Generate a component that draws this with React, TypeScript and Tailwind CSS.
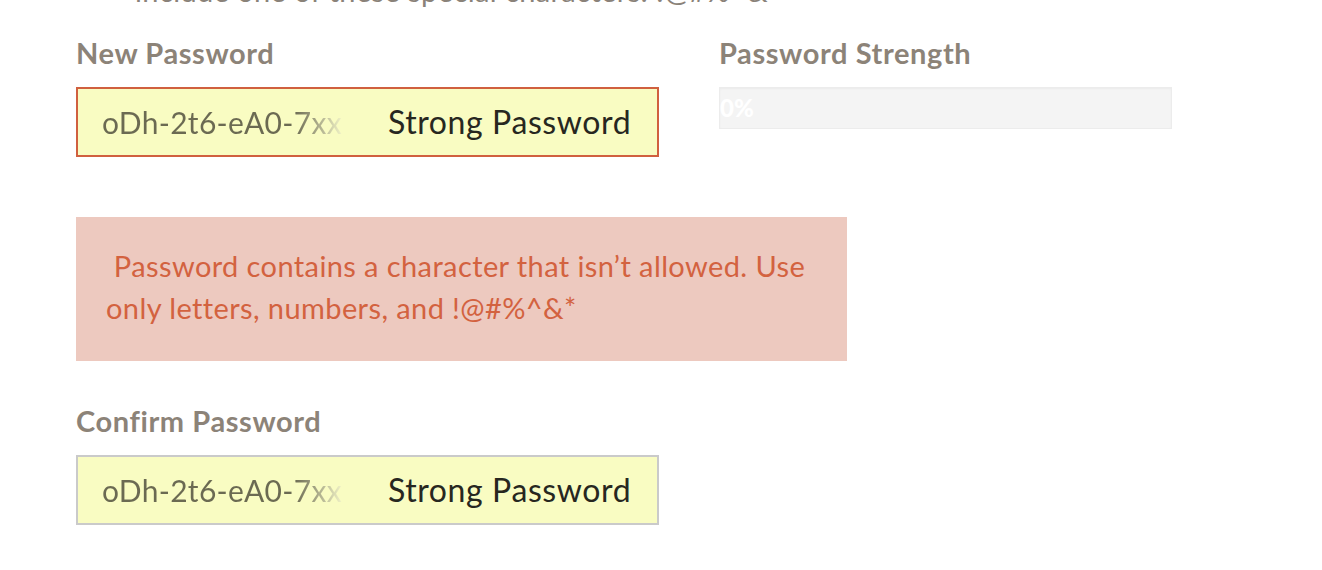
import React from "react"

const font = { fontFamily: "Lato, 'Open Sans', sans-serif" }

function PasswordInput({ error }: { error?: boolean }) {
  return (
    <div
      className={`flex h-[70px] w-[583px] items-center border-2 bg-[#f9fcc2] pl-[24px] ${
        error ? "border-[#d0603f]" : "border-[#cacaca]"
      }`}
    >
      <span className="whitespace-nowrap bg-gradient-to-r from-[#6b6a52] from-[80%] to-[#f0f2c6] to-[100%] bg-clip-text text-[30px] tracking-[0.3px] text-transparent">
        oDh-2t6-eA0-7xx
      </span>
      <span className="ml-[46px] whitespace-nowrap text-[32px] tracking-[0.6px] text-[#27271f]">Strong Password</span>
    </div>
  )
}

function Label({ children }: { children: React.ReactNode }) {
  return (
    <label className="block text-[29px] font-bold leading-[34px] tracking-[0.6px] text-[#8c8378]">{children}</label>
  )
}

export default function App() {
  return (
    <div style={font} className="h-[570px] w-[1322px] overflow-hidden bg-white pl-[76px]">
      <p className="-mt-[23px] whitespace-nowrap pl-[59px] text-[29px] leading-[28px] tracking-[0.4px] text-[#8a8279]">
        include one of these special characters: !@#%^&amp;
      </p>

      <div className="mt-[31px] flex gap-[60px]">
        <div>
          <Label>New Password</Label>
          <div className="mt-[17px]">
            <PasswordInput error />
          </div>
        </div>
        <div>
          <Label>Password Strength</Label>
          <div className="mt-[17px] flex h-[42px] w-[453px] items-center border border-[#ececec] bg-[#f4f4f4] shadow-[inset_0_1px_2px_rgba(0,0,0,0.04)]">
            <span className="text-[24px] font-black text-white">0%</span>
          </div>
        </div>
      </div>

      <div className="mt-[60px] h-[144px] w-[771px] bg-[#edc9bf] pl-[30px] pr-[30px] pt-[28px] text-[29px] leading-[42px] tracking-[0.4px] text-[#d3623f]">
        &nbsp;Password contains a character that isn’t allowed. Use only letters, numbers, and !@#%^&amp;*
      </div>

      <div className="mt-[43px]">
        <Label>Confirm Password</Label>
      </div>
      <div className="mt-[17px]">
        <PasswordInput />
      </div>
    </div>
  )
}
